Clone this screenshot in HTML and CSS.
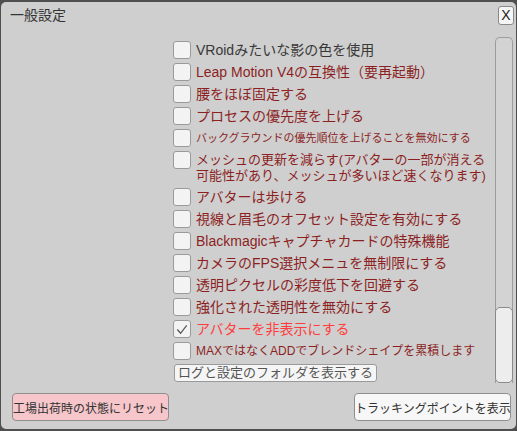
FILE: index.html
```html
<!DOCTYPE html>
<html lang="ja">
<head>
<meta charset="utf-8">
<title>一般設定</title>
<link rel="stylesheet" href="styles.css">
</head>
<body>
<div class="window">
  <div class="header">
    <span class="title">一般設定</span>
    <button class="close">X</button>
  </div>
  <div class="main">
    <div class="list">
      <label class="row"><span class="box"></span><span class="txt dark">VRoidみたいな影の色を使用</span></label>
      <label class="row"><span class="box"></span><span class="txt">Leap Motion V4の互換性（要再起動）</span></label>
      <label class="row"><span class="box"></span><span class="txt">腰をほぼ固定する</span></label>
      <label class="row"><span class="box"></span><span class="txt">プロセスの優先度を上げる</span></label>
      <label class="row"><span class="box"></span><span class="txt small">バックグラウンドの優先順位を上げることを無効にする</span></label>
      <label class="row multi"><span class="box"></span><span class="txt mid">メッシュの更新を減らす(アバターの一部が消える<br>可能性があり、メッシュが多いほど速くなります)</span></label>
      <label class="row"><span class="box"></span><span class="txt">アバターは歩ける</span></label>
      <label class="row"><span class="box"></span><span class="txt">視線と眉毛のオフセット設定を有効にする</span></label>
      <label class="row"><span class="box"></span><span class="txt">Blackmagicキャプチャカードの特殊機能</span></label>
      <label class="row"><span class="box"></span><span class="txt">カメラのFPS選択メニュを無制限にする</span></label>
      <label class="row"><span class="box"></span><span class="txt">透明ピクセルの彩度低下を回避する</span></label>
      <label class="row"><span class="box"></span><span class="txt">強化された透明性を無効にする</span></label>
      <label class="row"><span class="box checked"><svg width="17" height="17" viewBox="0 0 17 17"><polyline points="3.5,8.5 7,12.5 13.5,4" fill="none" stroke="#555" stroke-width="1.3"/></svg></span><span class="txt on">アバターを非表示にする</span></label>
      <label class="row"><span class="box"></span><span class="txt small2">MAXではなくADDでブレンドシェイプを累積します</span></label>
      <button class="folder">ログと設定のフォルダを表示する</button>
    </div>
    <div class="scrollbar"><div class="thumb"></div></div>
  </div>
  <div class="footer">
    <button class="btn reset">工場出荷時の状態にリセット</button>
    <button class="btn show">トラッキングポイントを表示</button>
  </div>
</div>
</body>
</html>
```

FILE: styles.css
```css
html, body {
  margin: 0;
  padding: 0;
}
body {
  background: #4f4f4f;
  width: 517px;
  height: 431px;
  overflow: hidden;
  font-family: "Liberation Sans", "Noto Sans CJK JP", sans-serif;
}
.window {
  margin: 2px 1px 0 1px;
  height: 427px;
  background: #cfcfcf;
  border-radius: 5px;
  display: flex;
  flex-direction: column;
  box-sizing: border-box;
}
.header {
  display: flex;
  justify-content: space-between;
  align-items: center;
  padding: 4px 2px 0 9px;
  height: 19px;
}
.title {
  font-size: 14px;
  line-height: 19px;
  color: #333;
}
.close {
  width: 16px;
  height: 19px;
  padding: 0;
  margin: 0;
  border: 1px solid #8a8a8a;
  border-radius: 3px;
  background: #f6f6f6;
  font-family: "Liberation Sans", sans-serif;
  font-size: 14px;
  line-height: 17px;
  color: #222;
}
.main {
  display: flex;
  margin-top: 12px;
  height: 346px;
  padding: 0 3px 0 172px;
}
.list {
  flex: 1;
  display: flex;
  flex-direction: column;
  gap: 4px;
  padding-top: 4px;
}
.row {
  display: flex;
  align-items: center;
  gap: 5px;
  height: 18px;
}
.row.multi {
  height: 33px;
  align-items: flex-start;
}
.box {
  flex: none;
  width: 16px;
  height: 16px;
  border: 1px solid #9a9a9a;
  border-radius: 3px;
  background: #f3f3f3;
  display: flex;
  align-items: center;
  justify-content: center;
}
.box svg {
  display: block;
}
.txt {
  font-size: 14px;
  line-height: 18px;
  color: #8c1f1f;
  white-space: nowrap;
}
.txt.dark {
  color: #383838;
}
.txt.on {
  color: #ff3d3d;
}
.txt.small {
  font-size: 11px;
}
.txt.small2 {
  font-size: 12px;
}
.txt.mid {
  font-size: 13px;
  line-height: 16px;
  padding-top: 1px;
}
.folder {
  align-self: flex-start;
  margin: 0 0 0 1px;
  height: 18px;
  padding: 0 3px;
  border: 1px solid #9a9a9a;
  border-radius: 3px;
  background: #f5f5f5;
  font-family: "Liberation Sans", "Noto Sans CJK JP", sans-serif;
  font-size: 13px;
  line-height: 16px;
  color: #555;
  white-space: nowrap;
}
.scrollbar {
  width: 18px;
  box-sizing: border-box;
  border: 1px solid #9c9c9c;
  border-bottom: none;
  border-radius: 5px 5px 0 0;
  background: #d3d3d3;
  display: flex;
  flex-direction: column;
  justify-content: flex-end;
}
.thumb {
  margin: 0 -1px;
  height: 74px;
  border: 1px solid #8a8a8a;
  border-radius: 5px;
  background: #ededed;
}
.footer {
  display: flex;
  justify-content: space-between;
  padding: 0 5px 0 11px;
  margin-top: 10px;
}
.btn {
  width: 157px;
  height: 28px;
  padding: 0;
  border: 1px solid #8f8f8f;
  border-radius: 4px;
  font-family: "Liberation Sans", "Noto Sans CJK JP", sans-serif;
  font-size: 12px;
  color: #333;
  white-space: nowrap;
}
.reset {
  background: #f6c6cb;
}
.show {
  background: #f7f7f7;
}
```
